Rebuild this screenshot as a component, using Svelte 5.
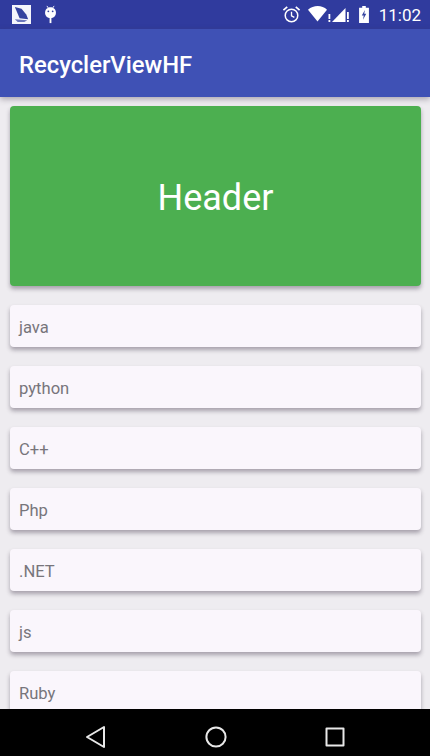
<script>
	const langs = ['java', 'python', 'C++', 'Php', '.NET', 'js', 'Ruby'];
</script>

<div class="page">
	<div class="status-bar">
		<div class="notifs">
			<svg class="pic" width="19" height="19" viewBox="0 0 20 20">
				<rect width="20" height="20" fill="#f4f5fb" />
				<path d="M3 2 L10 4 L15 10 L17 15 L8 14 Z" fill="#34439f" />
				<path d="M3 15 L16 16 L13 18 L6 18 Z" fill="#6a76bb" />
			</svg>
			<svg class="droid" width="13" height="19" viewBox="0 0 14 21">
				<path d="M3 1 L4.6 3.4 M11 1 L9.4 3.4" stroke="#fff" stroke-width="1" />
				<path d="M7 2.5 C10.5 2.5 13 5 13 8.5 C13 12 10.5 14.5 7 14.5 C3.5 14.5 1 12 1 8.5 C1 5 3.5 2.5 7 2.5 Z" fill="#fff" />
				<circle cx="4.6" cy="7" r="1" fill="#34439f" />
				<circle cx="9.4" cy="7" r="1" fill="#34439f" />
				<rect x="6" y="14" width="2" height="6" fill="#fff" />
			</svg>
		</div>
		<div class="sys">
			<svg class="alarm" width="19" height="19" viewBox="0 0 20 20" fill="none" stroke="#fff">
				<circle cx="10" cy="11" r="6.6" stroke-width="1.6" />
				<path d="M10 7 V11.4 L13 13" stroke-width="1.4" />
				<path d="M1.5 5.5 L5.5 2 M18.5 5.5 L14.5 2" stroke-width="1.8" />
			</svg>
			<svg class="wifi" width="24" height="17" viewBox="0 0 24 17">
				<path d="M0 3.8 C5.5 -1.2 14 -1.2 19 3.8 L9.5 15.5 Z" fill="#fff" />
				<rect x="20.5" y="8" width="1.8" height="5" fill="#fff" />
				<rect x="20.5" y="14" width="1.8" height="2" fill="#fff" />
			</svg>
			<svg class="signal" width="18" height="17" viewBox="0 0 18 17">
				<path d="M0 16 L13.5 2 V16 Z" fill="#fff" />
				<rect x="15" y="6" width="1.8" height="7" fill="#fff" />
				<rect x="15" y="14" width="1.8" height="2" fill="#fff" />
			</svg>
			<svg class="batt" width="12" height="17" viewBox="0 0 11 19">
				<path d="M3.5 0 H7.5 V2 H11 V19 H0 V2 H3.5 Z" fill="#fff" />
				<path d="M6.5 4.5 L3 10.5 H5.2 L4.4 15.5 L8 8.8 H5.8 Z" fill="#34439f" />
			</svg>
			<span class="clock">11:02</span>
		</div>
	</div>

	<header class="toolbar">RecyclerViewHF</header>

	<main class="list">
		<div class="card header-card">Header</div>
		{#each langs as lang}
			<div class="card item">{lang}</div>
		{/each}
	</main>

	<nav class="nav-bar">
		<svg width="22" height="24" viewBox="0 0 22 24" fill="none" stroke="#e8e8e8" stroke-width="2" stroke-linejoin="round">
			<path d="M19 2 V22 L2 12 Z" />
		</svg>
		<svg width="22" height="22" viewBox="0 0 22 22" fill="none" stroke="#e8e8e8" stroke-width="2">
			<circle cx="11" cy="11" r="9.6" />
		</svg>
		<svg width="20" height="20" viewBox="0 0 20 20" fill="none" stroke="#e8e8e8" stroke-width="2" stroke-linejoin="round">
			<rect x="1.5" y="1.5" width="17" height="17" />
		</svg>
	</nav>
</div>

<style>
	:global(body) {
		margin: 0;
	}

	.page {
		width: 430px;
		height: 756px;
		display: flex;
		flex-direction: column;
		overflow: hidden;
		background: #eeecf0;
		font-family: Roboto, 'Liberation Sans', sans-serif;
	}

	.status-bar {
		height: 29px;
		flex: none;
		background: #303b9e;
		display: flex;
		align-items: center;
		justify-content: space-between;
		padding: 0 9px 0 12px;
	}

	.notifs {
		display: flex;
		align-items: center;
		gap: 13px;
	}

	.sys {
		display: flex;
		align-items: center;
		gap: 0;
	}

	.alarm {
		margin-right: 7px;
	}

	.signal {
		margin-right: 8px;
	}

	.clock {
		color: #fff;
		font-size: 17px;
		margin-left: 9px;
	}

	.toolbar {
		height: 68px;
		flex: none;
		box-sizing: border-box;
		padding: 3px 0 0 19px;
		display: flex;
		align-items: center;
		background: #3f51b5;
		color: #fff;
		font-size: 23.8px;
		font-weight: 500;
		box-shadow: 0 2px 6px rgba(60, 50, 70, 0.4);
		z-index: 1;
	}

	.list {
		flex: 1;
		min-height: 0;
		overflow: hidden;
		padding: 9px 9px 0 10px;
		display: flex;
		flex-direction: column;
		gap: 19px;
	}

	.card {
		flex: none;
		border-radius: 4px;
		box-shadow: 0 3px 4px rgba(60, 50, 70, 0.4);
	}

	.header-card {
		height: 180px;
		box-sizing: border-box;
		padding-top: 4px;
		display: flex;
		align-items: center;
		justify-content: center;
		background: #4caf50;
		color: #fff;
		font-size: 36px;
	}

	.item {
		height: 42px;
		box-sizing: border-box;
		padding: 2px 0 0 9px;
		display: flex;
		align-items: center;
		background: #faf6fc;
		color: #77757b;
		font-size: 16.6px;
	}

	.nav-bar {
		height: 47px;
		flex: none;
		box-sizing: border-box;
		padding-top: 9px;
		background: #000;
		display: flex;
		align-items: center;
		justify-content: center;
		gap: 98px;
		z-index: 1;
	}
</style>
